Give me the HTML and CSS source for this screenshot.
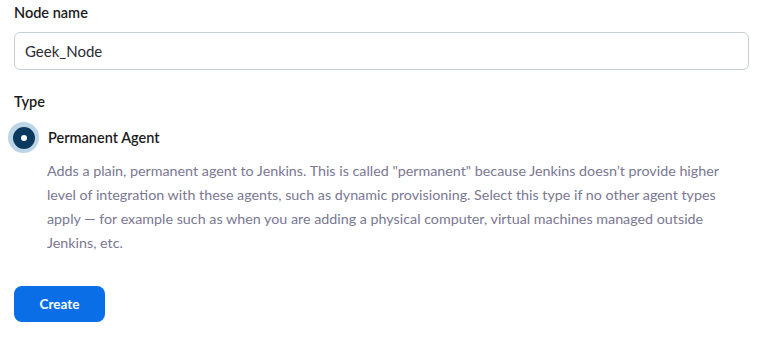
FILE: index.html
```html
<!DOCTYPE html>
<html lang="en">
<head>
    <meta charset="UTF-8">
    <title>New node</title>
    <link rel="stylesheet" href="styles.css">
</head>
<body>
    <form class="node-form">
        <label class="field-label" for="name">Node name</label>
        <input class="text-input" id="name" type="text" value="Geek_Node">

        <div class="field-label type-label">Type</div>

        <label class="option">
            <span class="radio"><span class="radio-dot"></span></span>
            <span class="option-title">Permanent Agent</span>
        </label>
        <p class="option-desc">Adds a plain, permanent agent to Jenkins. This is called "permanent" because Jenkins doesn’t provide higher level of integration with these agents, such as dynamic provisioning. Select this type if no other agent types apply — for example such as when you are adding a physical computer, virtual machines managed outside Jenkins, etc.</p>

        <button class="btn-create" type="button">Create</button>
    </form>
</body>
</html>
```

FILE: styles.css
```css
body { margin: 0; font-family: Lato, "Noto Sans", sans-serif; color: #1b1b22; background: #fff; }
.node-form { padding: 3px 19px 0 14px; display: flex; flex-direction: column; align-items: flex-start; }
.field-label { font-size: 14.5px; font-weight: 600; line-height: 20px; }
.text-input { box-sizing: border-box; width: 100%; height: 38px; margin-top: 9px; padding: 0 10px; border: 1.5px solid #c6cfd8; border-radius: 6px; font: inherit; font-size: 15px; color: #2b2b33; outline: none; }
.type-label { margin-top: 22px; }
.option { display: flex; align-items: center; gap: 9px; margin-top: 10px; margin-left: -6px; }
.radio { width: 31px; height: 31px; border-radius: 50%; background: #bcd6e7; display: flex; align-items: center; justify-content: center; }
.radio-dot { width: 22px; height: 22px; border-radius: 50%; box-sizing: border-box; border: 8px solid #0c3a5e; background: #fff; }
.option-title { font-size: 14.5px; font-weight: 600; }
.option-desc { margin: 6px 0 0 33px; font-size: 14.3px; line-height: 24px; color: #7a7892; }
.btn-create { margin-top: 31px; width: 91px; height: 36px; border: none; border-radius: 8px; background: #0a6fe6; color: #fff; font: inherit; font-size: 13.5px; font-weight: 700; cursor: pointer; }
```
